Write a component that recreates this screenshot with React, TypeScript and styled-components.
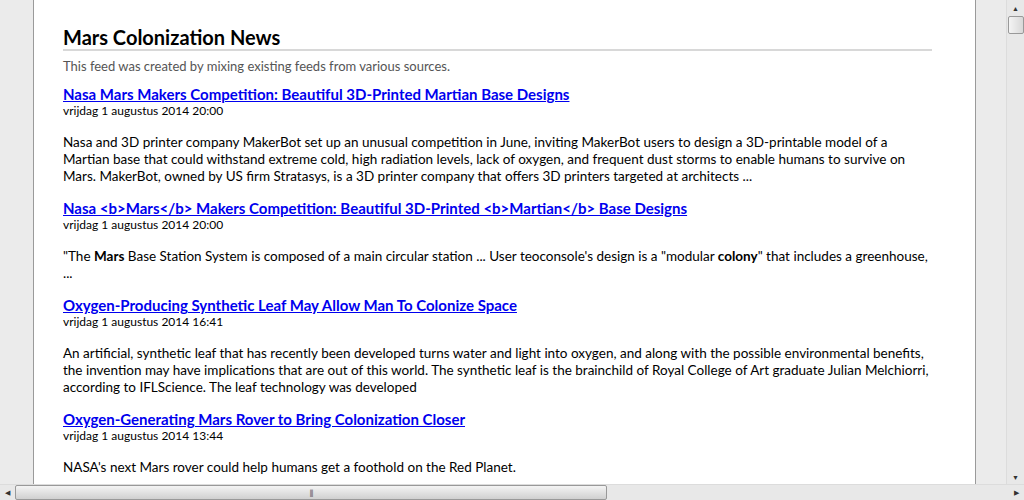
import React from 'react'
import styled, { createGlobalStyle } from 'styled-components'

const GlobalStyle = createGlobalStyle`
  html, body { margin: 0; padding: 0; }
  body { font-family: Lato, "Open Sans", sans-serif; background: #ebebeb; }
`

type Item = { title: string; date: string; body: React.ReactNode }

const items: Item[] = [
  {
    title: 'Nasa Mars Makers Competition: Beautiful 3D-Printed Martian Base Designs',
    date: 'vrijdag 1 augustus 2014 20:00',
    body: 'Nasa and 3D printer company MakerBot set up an unusual competition in June, inviting MakerBot users to design a 3D-printable model of a Martian base that could withstand extreme cold, high radiation levels, lack of oxygen, and frequent dust storms to enable humans to survive on Mars. MakerBot, owned by US firm Stratasys, is a 3D printer company that offers 3D printers targeted at architects ...',
  },
  {
    title: 'Nasa <b>Mars</b> Makers Competition: Beautiful 3D-Printed <b>Martian</b> Base Designs',
    date: 'vrijdag 1 augustus 2014 20:00',
    body: (
      <>
        "The <b>Mars</b> Base Station System is composed of a main circular station ... User teoconsole's design is a "modular <b>colony</b>" that includes a greenhouse, ...
      </>
    ),
  },
  {
    title: 'Oxygen-Producing Synthetic Leaf May Allow Man To Colonize Space',
    date: 'vrijdag 1 augustus 2014 16:41',
    body: 'An artificial, synthetic leaf that has recently been developed turns water and light into oxygen, and along with the possible environmental benefits, the invention may have implications that are out of this world. The synthetic leaf is the brainchild of Royal College of Art graduate Julian Melchiorri, according to IFLScience. The leaf technology was developed',
  },
  {
    title: 'Oxygen-Generating Mars Rover to Bring Colonization Closer',
    date: 'vrijdag 1 augustus 2014 13:44',
    body: "NASA's next Mars rover could help humans get a foothold on the Red Planet.",
  },
]

export default function App() {
  return (
    <>
      <GlobalStyle />
      <Frame>
        <TopRow>
          <Viewport>
            <Page>
              <Heading>Mars Colonization News</Heading>
              <Subtitle>This feed was created by mixing existing feeds from various sources.</Subtitle>
              {items.map((it, i) => (
                <Entry key={i}>
                  <EntryTitle href="#">{it.title}</EntryTitle>
                  <EntryDate>{it.date}</EntryDate>
                  <EntryBody>{it.body}</EntryBody>
                </Entry>
              ))}
            </Page>
          </Viewport>
          <VScroll>
            <Arrow>▲</Arrow>
            <VThumb />
            <Track />
            <Arrow>▼</Arrow>
          </VScroll>
        </TopRow>
        <HScroll>
          <Arrow>◀</Arrow>
          <HThumb>|||</HThumb>
          <Track />
          <Arrow>▶</Arrow>
        </HScroll>
      </Frame>
    </>
  )
}

const Frame = styled.div`
  height: 500px;
  display: flex;
  flex-direction: column;
  overflow: hidden;
`
const TopRow = styled.div`
  flex: 1;
  display: flex;
  min-height: 0;
`
const Viewport = styled.div`
  flex: 1;
  overflow: hidden;
  padding-left: 33px;
`
const Page = styled.div`
  width: 869px;
  min-height: 100%;
  background: #fff;
  border-left: 1px solid #9a9a9a;
  border-right: 1px solid #9a9a9a;
  padding: 25px 43px 0 29px;
  box-sizing: content-box;
`
const Heading = styled.h1`
  margin: 0;
  font-size: 20px;
  font-weight: bold;
  color: #000;
  line-height: 24px;
  padding-bottom: 0;
  border-bottom: 2px solid #d8d8d8;
`
const Subtitle = styled.div`
  font-size: 13px;
  color: #555;
  margin: 7px 0 9px;
  line-height: 17px;
`
const Entry = styled.div`
  margin-bottom: 13px;
`
const EntryTitle = styled.a`
  display: inline-block;
  font-size: 15px;
  font-weight: bold;
  color: #0000ee;
  text-decoration: underline;
  line-height: 17px;
`
const EntryDate = styled.div`
  font-size: 12px;
  color: #000;
  line-height: 15px;
  margin-bottom: 16px;
`
const EntryBody = styled.div`
  font-size: 13.5px;
  color: #000;
  line-height: 17px;
`
const VScroll = styled.div`
  width: 17px;
  display: flex;
  flex-direction: column;
  background: #e8e8e8;
  border-left: 1px solid #dcdcdc;
`
const HScroll = styled.div`
  height: 15px;
  display: flex;
  background: #e8e8e8;
  border-top: 1px solid #dcdcdc;
`
const Arrow = styled.div`
  flex: 0 0 15px;
  font-size: 7px;
  color: #333;
  display: flex;
  align-items: center;
  justify-content: center;
`
const Track = styled.div`
  flex: 1;
`
const VThumb = styled.div`
  flex: 0 0 16px;
  margin: 1px 0 0 1px;
  border: 1px solid #999;
  border-radius: 2px;
  background: linear-gradient(to right, #f4f4f4, #d8d8d8);
`
const HThumb = styled.div`
  flex: 0 0 590px;
  border: 1px solid #999;
  border-radius: 2px;
  background: linear-gradient(#f4f4f4, #d0d0d0);
  font-size: 8px;
  color: #555;
  display: flex;
  align-items: center;
  justify-content: center;
  letter-spacing: -1px;
`
